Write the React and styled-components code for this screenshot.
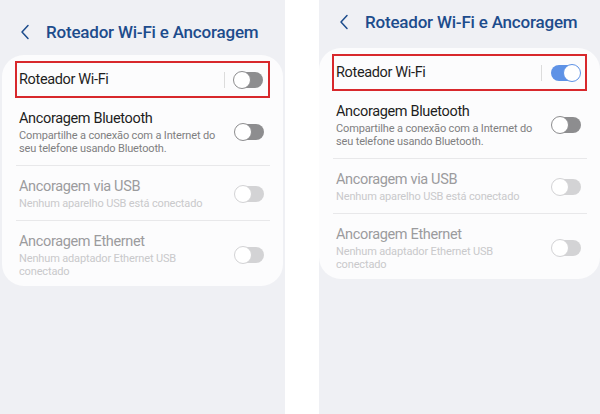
import React from "react";
import styled, { createGlobalStyle } from "styled-components";

const GlobalStyle = createGlobalStyle`
  html, body {
    margin: 0;
    padding: 0;
    background: #ffffff;
  }
  body {
    font-family: Roboto, "Noto Sans", "Liberation Sans", sans-serif;
  }
`;

const rows = [
  {
    title: "Ancoragem Bluetooth",
    sub: ["Compartilhe a conexão com a Internet do", "seu telefone usando Bluetooth."],
    disabled: false,
  },
  {
    title: "Ancoragem via USB",
    sub: ["Nenhum aparelho USB está conectado"],
    disabled: true,
  },
  {
    title: "Ancoragem Ethernet",
    sub: ["Nenhum adaptador Ethernet USB", "conectado"],
    disabled: true,
  },
];

const Toggle = ({ on, disabled }) => (
  <Track $on={on} $disabled={disabled}>
    <Knob $on={on} $disabled={disabled} />
  </Track>
);

const Screen = ({ on, shift, cardInset }) => (
  <Panel $width={cardInset ? 285 : 281}>
    <Header $shift={shift}>
      <Back viewBox="0 0 10 16">
        <path d="M8 1.5 L2 8 L8 14.5" />
      </Back>
      <Title>Roteador Wi-Fi e Ancoragem</Title>
    </Header>
    <Card $inset={cardInset}>
      <MainRow>
        <RowTitle>Roteador Wi-Fi</RowTitle>
        <Separator />
        <Toggle on={on} />
      </MainRow>
      {rows.map((row, i) => (
        <React.Fragment key={row.title}>
          {i > 0 && <Divider />}
          <Row $last={i === rows.length - 1}>
            <TextBlock>
              <RowTitle $disabled={row.disabled}>{row.title}</RowTitle>
              {row.sub.map(line => (
                <Sub key={line} $disabled={row.disabled}>
                  {line}
                </Sub>
              ))}
            </TextBlock>
            <Toggle disabled={row.disabled} />
          </Row>
        </React.Fragment>
      ))}
    </Card>
  </Panel>
);

export default function App() {
  return (
    <>
      <GlobalStyle />
      <Page>
        <Screen on={false} shift={0} cardInset />
        <Gap />
        <Screen on shift={-10} />
      </Page>
    </>
  );
}

const Page = styled.div`
  display: flex;
  width: 600px;
  height: 414px;
  overflow: hidden;
`;

const Gap = styled.div`
  width: 34px;
  flex-shrink: 0;
  background: #ffffff;
`;

const Panel = styled.div`
  width: ${p => p.$width}px;
  flex-shrink: 0;
  background: #eff0f4;
  display: flex;
  flex-direction: column;
`;

const Header = styled.div`
  height: 22px;
  margin-top: ${p => 21 + p.$shift}px;
  margin-bottom: ${p => 12 - p.$shift * 0.3}px;
  display: flex;
  align-items: center;
  padding-left: 20px;
  gap: 16px;
`;

const Back = styled.svg`
  width: 10px;
  height: 16px;
  fill: none;
  stroke: #1d4c8c;
  stroke-width: 1.5;
  stroke-linecap: round;
  stroke-linejoin: round;
`;

const Title = styled.div`
  font-size: 17px;
  font-weight: 500;
  color: #1d4c8c;
  letter-spacing: -0.2px;
`;

const Card = styled.div`
  background: #fcfcfd;
  border-radius: 22px;
  margin: 0 ${p => (p.$inset ? "2px" : "0")};
  padding: 6px 0 0;
`;

const MainRow = styled.div`
  height: 33px;
  margin: 0 13px;
  border: 2px solid #d8282c;
  display: flex;
  align-items: center;
  padding: 0 5px 0 2px;
`;

const Separator = styled.div`
  width: 1px;
  height: 16px;
  background: #dcdcdc;
  margin: 0 9px 0 auto;
`;

const Row = styled.div`
  display: flex;
  align-items: center;
  padding: 11px 19px ${p => (p.$last ? 8 : 10)}px 17px;
`;

const TextBlock = styled.div`
  flex: 1;
  display: flex;
  flex-direction: column;
`;

const RowTitle = styled.div`
  font-size: 14.5px;
  line-height: 20px;
  letter-spacing: -0.35px;
  color: ${p => (p.$disabled ? "#9b9b9d" : "#1e1e1e")};
`;

const Sub = styled.div`
  font-size: 11px;
  line-height: 13px;
  letter-spacing: -0.15px;
  color: ${p => (p.$disabled ? "#c9c9cb" : "#7f7f81")};
`;

const Divider = styled.div`
  height: 1px;
  background: #e8e8ea;
  margin: 0 13px 0 14px;
`;

const Track = styled.div`
  position: relative;
  width: 29px;
  height: 16px;
  border-radius: 8px;
  flex-shrink: 0;
  background: ${p => (p.$on ? "#5e92e6" : p.$disabled ? "#d3d3d5" : "#8d8d8f")};
`;

const Knob = styled.div`
  position: absolute;
  top: -1px;
  ${p => (p.$on ? "right: -1px;" : "left: -1px;")}
  width: 18px;
  height: 18px;
  box-sizing: border-box;
  border-radius: 50%;
  background: #ffffff;
  border: 1.5px solid
    ${p => (p.$on ? "#5e92e6" : p.$disabled ? "#d3d3d5" : "#8d8d8f")};
`;
